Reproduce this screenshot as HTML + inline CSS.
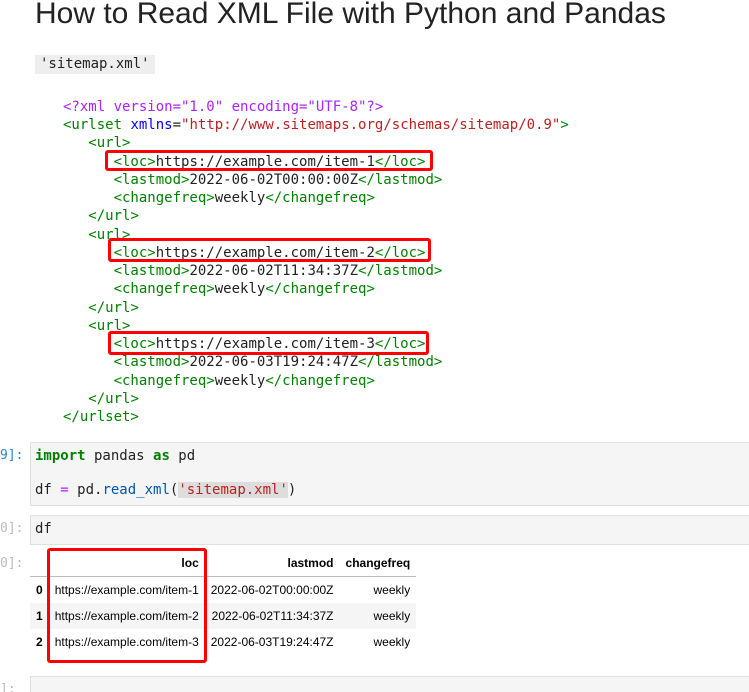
<!DOCTYPE html>
<html><head><style>
html,body{margin:0;width:749px;height:692px;overflow:hidden;}
body{background:#fff;position:relative;font-family:"Liberation Sans",sans-serif;}
.a{position:absolute;white-space:pre;}
.m{font-family:"DejaVu Sans Mono",monospace;font-size:14px;line-height:18.24px;}
.t{color:#008000}.p{color:#aa22ff}.s{color:#ba2121}.b{color:#0000ff}.k{color:#222}
.r{position:absolute;border:3px solid #ff0000;border-radius:3px;box-sizing:border-box}
.cell{position:absolute;left:30px;right:-5px;background:#f5f5f5;border:1px solid #e0e0e0;}
.pr{position:absolute;font-family:"DejaVu Sans Mono",monospace;font-size:13px;color:#bbb}
table{position:absolute;left:30px;top:550px;border-collapse:collapse;font-size:12px;color:#000}
td,th{padding:0 6px;height:26px;text-align:right}
th{font-weight:bold}
</style></head><body>
<div class="a" style="left:35px;top:-3px;font-size:30px;color:#222">How to Read XML File with Python and Pandas</div>
<div class="a m" style="left:35px;top:55px;background:#eee;padding:0 5px;height:19px;color:#222">'sitemap.xml'</div>
<div class="a m" style="left:63px;top:98px;color:#222"><span class="p">&lt;?xml version="1.0" encoding="UTF-8"?&gt;</span>
<span class="t">&lt;urlset</span> <span class="b">xmlns</span>=<span class="s">"http://www.sitemaps.org/schemas/sitemap/0.9"</span><span class="t">&gt;</span>
   <span class="t">&lt;url&gt;</span>
      <span class="t">&lt;loc&gt;</span>https://example.com/item-1<span class="t">&lt;/loc&gt;</span>
      <span class="t">&lt;lastmod&gt;</span>2022-06-02T00:00:00Z<span class="t">&lt;/lastmod&gt;</span>
      <span class="t">&lt;changefreq&gt;</span>weekly<span class="t">&lt;/changefreq&gt;</span>
   <span class="t">&lt;/url&gt;</span>
   <span class="t">&lt;url&gt;</span>
      <span class="t">&lt;loc&gt;</span>https://example.com/item-2<span class="t">&lt;/loc&gt;</span>
      <span class="t">&lt;lastmod&gt;</span>2022-06-02T11:34:37Z<span class="t">&lt;/lastmod&gt;</span>
      <span class="t">&lt;changefreq&gt;</span>weekly<span class="t">&lt;/changefreq&gt;</span>
   <span class="t">&lt;/url&gt;</span>
   <span class="t">&lt;url&gt;</span>
      <span class="t">&lt;loc&gt;</span>https://example.com/item-3<span class="t">&lt;/loc&gt;</span>
      <span class="t">&lt;lastmod&gt;</span>2022-06-03T19:24:47Z<span class="t">&lt;/lastmod&gt;</span>
      <span class="t">&lt;changefreq&gt;</span>weekly<span class="t">&lt;/changefreq&gt;</span>
   <span class="t">&lt;/url&gt;</span>
<span class="t">&lt;/urlset&gt;</span></div>
<div class="r" style="left:105px;top:150px;width:328px;height:21px"></div>
<div class="r" style="left:108px;top:238px;width:323px;height:24px"></div>
<div class="r" style="left:108px;top:331px;width:321px;height:24px"></div>

<div class="pr" style="left:0;top:448px;color:#307fc1">9]:</div>
<div class="cell" style="top:442px;height:62px"></div>
<div class="a m" style="left:35px;top:448px;line-height:17px;color:#222"><b style="color:#008000">import</b> pandas <b style="color:#008000">as</b> pd

df <span style="color:#aa22ff">=</span> pd.<span style="color:#0055aa">read_xml</span>(<span class="s" style="background:#ddd">'sitemap.xml'</span>)</div>

<div class="pr" style="left:0;top:521px">0]:</div>
<div class="cell" style="top:515px;height:28px"></div>
<div class="a m" style="left:35px;top:520px;color:#222">df</div>

<div class="pr" style="left:0;top:556px">0]:</div>
<table>
<tr style="border-bottom:1px solid #bbb"><th style="width:6px"></th><th>loc</th><th>lastmod</th><th>changefreq</th></tr>
<tr><th>0</th><td>https://example.com/item-1</td><td>2022-06-02T00:00:00Z</td><td>weekly</td></tr>
<tr style="background:#f5f5f5"><th>1</th><td>https://example.com/item-2</td><td>2022-06-02T11:34:37Z</td><td>weekly</td></tr>
<tr><th>2</th><td>https://example.com/item-3</td><td>2022-06-03T19:24:47Z</td><td>weekly</td></tr>
</table>
<div class="r" style="left:47px;top:548px;width:160px;height:115px"></div>

<div class="pr" style="left:0;top:682px">]:</div>
<div class="cell" style="top:676px;height:30px"></div>
</body></html>
